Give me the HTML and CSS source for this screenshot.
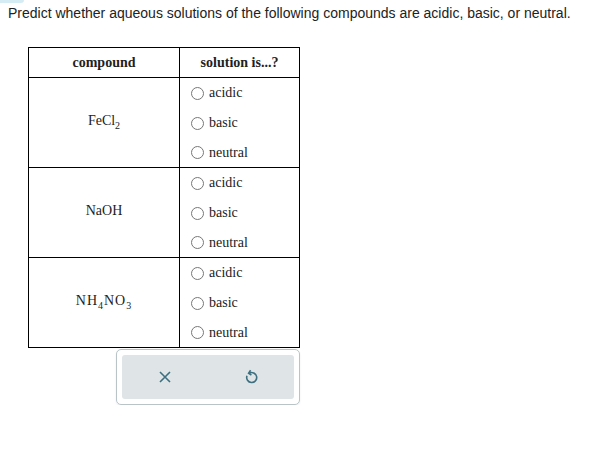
FILE: index.html
```html
<!DOCTYPE html>
<html lang="en">
<head>
    <meta charset="UTF-8">
    <title>Acidic, basic or neutral</title>
    <link rel="stylesheet" href="styles.css">
</head>
<body>
    <div class="corner"></div>
    <p class="prompt">Predict whether aqueous solutions of the following compounds are acidic, basic, or neutral.</p>

    <table class="answers">
        <tr>
            <th class="col-compound">compound</th>
            <th class="col-solution">solution is...?</th>
        </tr>
        <tr>
            <td class="compound">FeCl<sub>2</sub></td>
            <td class="choices">
                <label><span class="radio"></span>acidic</label>
                <label><span class="radio"></span>basic</label>
                <label><span class="radio"></span>neutral</label>
            </td>
        </tr>
        <tr>
            <td class="compound">NaOH</td>
            <td class="choices">
                <label><span class="radio"></span>acidic</label>
                <label><span class="radio"></span>basic</label>
                <label><span class="radio"></span>neutral</label>
            </td>
        </tr>
        <tr>
            <td class="compound spaced">NH<sub>4</sub>NO<sub>3</sub></td>
            <td class="choices">
                <label><span class="radio"></span>acidic</label>
                <label><span class="radio"></span>basic</label>
                <label><span class="radio"></span>neutral</label>
            </td>
        </tr>
    </table>

    <div class="tools">
        <div class="tools-inner">
            <button class="tool" title="Clear">
                <svg width="14" height="14" viewBox="0 0 14 14"><path d="M2 2 L12 12 M12 2 L2 12" stroke="#3d6f80" stroke-width="1.6" fill="none"/></svg>
            </button>
            <button class="tool" title="Undo">
                <svg width="16" height="16" viewBox="0 0 16 16"><path d="M6.2 4.2 A5 5 0 1 1 4 6.8" stroke="#3d6f80" stroke-width="1.6" fill="none"/><path d="M7.6 1.2 L5.6 4.3 L8.4 6" stroke="#3d6f80" stroke-width="1.6" fill="none"/></svg>
            </button>
        </div>
    </div>
</body>
</html>
```

FILE: styles.css
```css
body {
    margin: 0;
    padding: 0 8px;
    font-family: "Liberation Sans", Arial, sans-serif;
    color: #222;
    background: #fff;
}
.corner {
    position: absolute;
    left: 0;
    top: 0;
    width: 24px;
    height: 3px;
    background: #d6ecf5;
    border-bottom-right-radius: 3px;
}
.prompt {
    margin: 5px 0 0 0;
    font-size: 14px;
    line-height: 17px;
}
.answers {
    margin: 25px 0 0 20px;
    border-collapse: collapse;
    font-family: "Liberation Serif", "Times New Roman", serif;
    font-size: 14px;
    color: #222;
}
.answers th,
.answers td {
    border: 1px solid #000;
    padding: 0;
}
.answers th {
    height: 29px;
    font-weight: bold;
}
.col-compound {
    width: 150px;
}
.col-solution {
    width: 119px;
}
.answers td.compound {
    text-align: center;
    height: 86px;
    padding-bottom: 3px;
}
.compound sub {
    font-size: 10px;
    vertical-align: -4px;
    line-height: 0;
}
.spaced {
    letter-spacing: 1px;
}
.choices label {
    display: flex;
    align-items: center;
    height: 30px;
    padding-left: 11px;
    box-sizing: border-box;
}
.choices label:last-child {
    height: 29px;
}
.radio {
    display: inline-block;
    width: 11px;
    height: 11px;
    border: 1px solid #777;
    border-radius: 50%;
    margin-right: 5px;
    background: #fff;
}
.tools {
    margin: 1px 0 0 108px;
    width: 172px;
    padding: 5px;
    border: 1px solid #b8c4c8;
    border-radius: 5px;
    box-shadow: 0 1px 2px rgba(0,0,0,0.08);
}
.tools-inner {
    display: flex;
    background: #dfe5e7;
    border-radius: 3px;
    height: 44px;
}
.tool {
    flex: 1;
    background: none;
    border: none;
    padding: 0;
    display: flex;
    align-items: center;
    justify-content: center;
    cursor: pointer;
}
```
